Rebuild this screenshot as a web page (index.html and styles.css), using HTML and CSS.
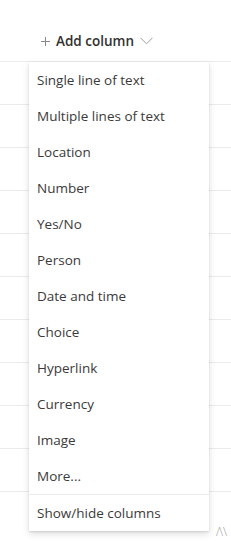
FILE: index.html
```html
<!DOCTYPE html>
<html lang="en">
<head>
  <meta charset="UTF-8">
  <title>Add column</title>
  <link rel="stylesheet" href="styles.css">
</head>
<body>
  <div class="list">
    <div class="list-header">
      <button class="add-column">
        <svg class="plus" width="9" height="9" viewBox="0 0 9 9"><path d="M4.5 0 V9 M0 4.5 H9" fill="none" stroke="#8a8886" stroke-width="1"/></svg>
        <span class="label">Add column</span>
        <svg class="chevron" width="13" height="8" viewBox="0 0 13 8"><path d="M0.5 0.8 L6.5 6.8 L12.5 0.8" fill="none" stroke="#a19f9d" stroke-width="1"/></svg>
      </button>
    </div>
    <div class="row"></div>
    <div class="row"></div>
    <div class="row"></div>
    <div class="row"></div>
    <div class="row"></div>
    <div class="row"></div>
    <div class="row"></div>
    <div class="row"></div>
    <div class="row"></div>
    <div class="row last"></div>
    <div class="footer-glyph">Λ\</div>

    <!-- column type menu -->
    <ul class="menu">
      <li>Single line of text</li>
      <li>Multiple lines of text</li>
      <li>Location</li>
      <li>Number</li>
      <li>Yes/No</li>
      <li>Person</li>
      <li>Date and time</li>
      <li>Choice</li>
      <li>Hyperlink</li>
      <li>Currency</li>
      <li>Image</li>
      <li>More...</li>
      <li class="divider">Show/hide columns</li>
    </ul>
  </div>
</body>
</html>
```

FILE: styles.css
```css
body {
  margin: 0;
  font-family: "Open Sans", "Noto Sans", Arial, sans-serif;
  background-color: white;
  color: #323130;
}
.list {
  position: relative;
  height: 541px;
  overflow: hidden;
}
.list-header {
  height: 61px;
  border-bottom: 1px solid #edebe9;
  display: flex;
  align-items: center;
  padding-left: 41px;
}
.add-column {
  display: flex;
  align-items: center;
  background: none;
  border: none;
  padding: 0;
  margin-top: 20px;
  font-family: inherit;
  color: #323130;
}
.plus {
  margin-right: 6px;
  margin-top: 1px;
}
.label {
  font-size: 13.5px;
  font-weight: 600;
}
.chevron {
  margin-left: 6px;
  margin-top: 1px;
}
.row {
  height: 42px;
  border-bottom: 1px solid #edebe9;
}
.footer-glyph {
  position: absolute;
  left: 216px;
  top: 524px;
  font-size: 12px;
  line-height: 16px;
  color: #a19f9d;
  font-weight: 300;
}
.menu {
  position: absolute;
  top: 62px;
  left: 29px;
  width: 180px;
  margin: 0;
  padding: 0;
  list-style: none;
  background-color: white;
  box-shadow: 0 3.2px 7.2px rgba(0,0,0,0.13), 0 0.6px 1.8px rgba(0,0,0,0.11);
}
.menu li {
  height: 36px;
  line-height: 36px;
  padding-left: 8px;
  font-size: 13.5px;
  color: #3b3a39;
  white-space: nowrap;
}
.menu li.divider {
  border-top: 1px solid #edebe9;
}
```
